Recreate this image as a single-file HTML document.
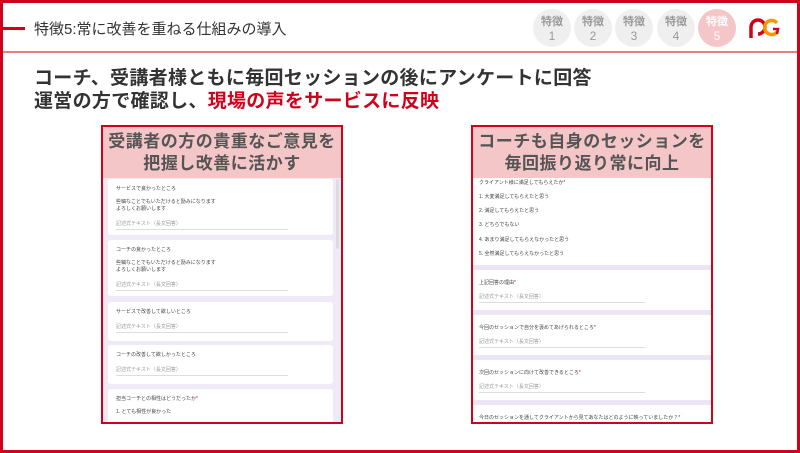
<!DOCTYPE html>
<html><head><meta charset="utf-8"><style>
*{margin:0;padding:0;box-sizing:border-box}
body{width:800px;height:453px;overflow:hidden;background:#fff;font-family:"Liberation Sans","Noto Sans CJK JP",sans-serif;position:relative;color:#333}
.frame{position:absolute;left:0;top:0;width:800px;height:453px;border:3px solid #d0021b}
.tick{position:absolute;left:0;top:27px;width:25px;height:3px;background:#d0021b}
.title{position:absolute;left:34px;top:18px;font-size:15px;color:#333}
.hline{position:absolute;left:3px;right:3px;top:51px;height:2px;background:#e88080}
.b{position:absolute;top:9px;width:38px;height:38px;border-radius:50%;background:#efefef;color:#999;font-size:11px;text-align:center;line-height:14px;padding-top:6px;font-weight:bold}
.b span{font-weight:normal;font-size:12px}
.b.on{background:#f5c6c8;color:#fff}
.h{position:absolute;left:34px;font-size:19px;font-weight:bold;color:#333;letter-spacing:0.3px}
.panel{position:absolute;top:125px;width:242px;height:299px;border:2px solid #d0021b;background:#efeaf6;overflow:hidden}
.ph{height:51px;background:#f5c6c8;color:#555;font-size:17px;font-weight:bold;text-align:center;line-height:22px;padding-top:4px;letter-spacing:0.5px}
.card{position:absolute;left:5px;width:225px;background:#fff;border-radius:3px;font-size:5px;color:#444;padding:6px 8px}
.card .f{color:#999;margin-top:8px;border-bottom:1px solid #ddd;width:172px;padding-bottom:2px}
.r{position:absolute;left:0;width:238px;font-size:5px;color:#444;padding-left:6px}
.band{position:absolute;left:0;width:238px;height:5px;background:#ece6f4}
.rf{position:absolute;left:6px;width:166px;font-size:5px;color:#999;border-bottom:1px solid #ddd;padding-bottom:2px}
s{color:#d0021b;text-decoration:none}
</style></head><body>
<div class="frame"></div>
<div class="tick"></div>
<div class="title">特徴5:常に改善を重ねる仕組みの導入</div>
<div class="hline"></div>
<div class="b" style="left:533px">特徴<br><span>1</span></div>
<div class="b" style="left:574px">特徴<br><span>2</span></div>
<div class="b" style="left:615px">特徴<br><span>3</span></div>
<div class="b" style="left:657px">特徴<br><span>4</span></div>
<div class="b on" style="left:698px">特徴<br><span>5</span></div>
<svg style="position:absolute;left:747px;top:17px" width="34" height="22" viewBox="0 0 34 22"><path d="M4 21 V10 a7 7 0 1 1 7 7" fill="none" stroke="#d0021b" stroke-width="3.5"/><path d="M30 6 a7 7 0 1 0 0 9" fill="none" stroke="#f39800" stroke-width="3.5"/><path d="M26 12 l5 0 l-1 5" fill="none" stroke="#d0021b" stroke-width="2.5"/></svg>
<div class="h" style="top:63px">コーチ、受講者様ともに毎回セッションの後にアンケートに回答</div>
<div class="h" style="top:86px">運営の方で確認し、<span style="color:#d0021b">現場の声をサービスに反映</span></div>

<div class="panel" style="left:101px">
<div class="ph">受講者の方の貴重なご意見を<br>把握し改善に活かす</div>
<div style="position:absolute;right:2px;top:52px;width:3px;height:70px;background:#ddd;border-radius:2px"></div>
<div class="card" style="top:52px;height:56px">サービスで良かったところ<br><br>些細なことでもいただけると励みになります<br>よろしくお願いします<div class="f">記述式テキスト（長文回答）</div></div>
<div class="card" style="top:113px;height:56px">コーチの良かったところ<br><br>些細なことでもいただけると励みになります<br>よろしくお願いします<div class="f">記述式テキスト（長文回答）</div></div>
<div class="card" style="top:175px;height:39px">サービスで改善して欲しいところ<div class="f">記述式テキスト（長文回答）</div></div>
<div class="card" style="top:218px;height:39px">コーチの改善して欲しかったところ<div class="f">記述式テキスト（長文回答）</div></div>
<div class="card" style="top:262px;height:40px">担当コーチとの相性はどうだったか<s>*</s><br><br>1. とても相性が良かった</div>
</div>

<div class="panel" style="left:471px;background:#fff">
<div class="ph">コーチも自身のセッションを<br>毎回振り返り常に向上</div>
<div class="r" style="top:52px">クライアント様に満足してもらえたか<s>*</s></div>
<div class="r" style="top:66px">1. 大変満足してもらえたと思う</div>
<div class="r" style="top:80px">2. 満足してもらえたと思う</div>
<div class="r" style="top:94px">3. どちらでもない</div>
<div class="r" style="top:109px">4. あまり満足してもらえなかったと思う</div>
<div class="r" style="top:123px">5. 全然満足してもらえなかったと思う</div>
<div class="band" style="top:138px"></div>
<div class="r" style="top:152px">上記回答の理由<s>*</s></div>
<div class="rf" style="top:166px">記述式テキスト（長文回答）</div>
<div class="band" style="top:183px"></div>
<div class="r" style="top:197px">今回のセッションで自分を褒めてあげられるところ<s>*</s></div>
<div class="rf" style="top:211px">記述式テキスト（長文回答）</div>
<div class="band" style="top:228px"></div>
<div class="r" style="top:242px">次回のセッションに向けて改善できるところ<s>*</s></div>
<div class="rf" style="top:256px">記述式テキスト（長文回答）</div>
<div class="band" style="top:273px"></div>
<div class="r" style="top:287px">今日のセッションを通してクライアントから見てあなたはどのように映っていましたか？<s>*</s></div>
</div>
</body></html>
